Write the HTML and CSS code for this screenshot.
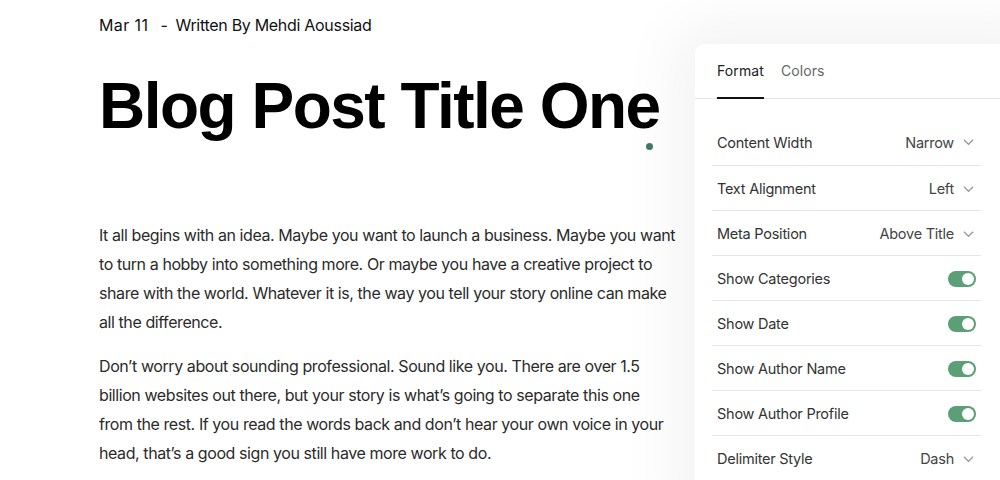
FILE: index.html
```html
<!DOCTYPE html>
<html lang="en">
  <head>
    <meta charset="UTF-8" />
    <meta name="viewport" content="width=device-width, initial-scale=1.0" />
    <title>Blog Post Title One</title>
    <link rel="stylesheet" href="styles.css">
  </head>
  <body>
    <article class="post">
      <div class="meta">
        <span class="date">Mar 11</span>
        <span class="dash">-</span>
        <span>Written By Mehdi Aoussiad</span>
      </div>
      <h1 class="title">Blog Post Title One<span class="cursor-dot"></span></h1>
      <div class="body">
        <p>It all begins with an idea. Maybe you want to launch a business. Maybe you want to turn a hobby into something more. Or maybe you have a creative project to share with the world. Whatever it is, the way you tell your story online can make all the difference.</p>
        <p>Don’t worry about sounding professional. Sound like you. There are over 1.5 billion websites out there, but your story is what’s going to separate this one from the rest. If you read the words back and don’t hear your own voice in your head, that’s a good sign you still have more work to do.</p>
      </div>
    </article>

    <aside class="panel">
      <div class="panel-tabs">
        <button class="panel-tab active">Format</button>
        <button class="panel-tab">Colors</button>
      </div>
      <ul class="options">
        <li class="option">
          <span>Content Width</span>
          <span class="select">Narrow <svg class="chev" viewBox="0 0 12 8"><path d="M1 1.5l5 5 5-5" /></svg></span>
        </li>
        <li class="option">
          <span>Text Alignment</span>
          <span class="select">Left <svg class="chev" viewBox="0 0 12 8"><path d="M1 1.5l5 5 5-5" /></svg></span>
        </li>
        <li class="option">
          <span>Meta Position</span>
          <span class="select">Above Title <svg class="chev" viewBox="0 0 12 8"><path d="M1 1.5l5 5 5-5" /></svg></span>
        </li>
        <li class="option">
          <span>Show Categories</span>
          <span class="toggle on"></span>
        </li>
        <li class="option">
          <span>Show Date</span>
          <span class="toggle on"></span>
        </li>
        <li class="option">
          <span>Show Author Name</span>
          <span class="toggle on"></span>
        </li>
        <li class="option">
          <span>Show Author Profile</span>
          <span class="toggle on"></span>
        </li>
        <li class="option">
          <span>Delimiter Style</span>
          <span class="select">Dash <svg class="chev" viewBox="0 0 12 8"><path d="M1 1.5l5 5 5-5" /></svg></span>
        </li>
      </ul>
    </aside>
  </body>
</html>
```

FILE: styles.css
```css
* {
  margin: 0;
  padding: 0;
  box-sizing: border-box;
}

body {
  font-family: Inter, "Noto Sans", sans-serif;
  background-color: #fff;
  color: #222;
  height: 480px;
  overflow: hidden;
}

.post {
  padding: 14px 0 0 99px;
  width: 690px;
}

.meta {
  display: flex;
  font-size: 16px;
  line-height: 22px;
  color: #111;
  letter-spacing: -0.3px;
}

.meta .date {
  letter-spacing: 0.4px;
}

.meta .dash {
  margin: 0 8px 0 12px;
}

.title {
  position: relative;
  margin-top: 34px;
  font-family: "Liberation Sans", Arial, sans-serif;
  font-weight: 700;
  font-size: 64px;
  line-height: 72px;
  color: #000;
  letter-spacing: -1.5px;
}

.cursor-dot {
  position: absolute;
  left: 547px;
  top: 73px;
  width: 7px;
  height: 7px;
  border-radius: 50%;
  background-color: #3f7d63;
}

.body {
  margin-top: 79px;
  width: 578px;
  font-size: 16px;
  line-height: 29px;
  color: #2b2b2b;
  letter-spacing: -0.42px;
}

.body p + p {
  margin-top: 15px;
}

/* floating settings panel */
.panel {
  position: absolute;
  top: 44px;
  left: 695px;
  width: 330px;
  height: 480px;
  background-color: #fff;
  border-radius: 10px;
  box-shadow: 0 0 60px 20px rgba(0, 0, 0, 0.05);
}

.panel-tabs {
  display: flex;
  gap: 17px;
  padding: 0 22px;
  height: 55px;
  border-bottom: 1px solid #e3e3e3;
}

.panel-tab {
  border: none;
  background: none;
  font-family: inherit;
  font-size: 14px;
  letter-spacing: 0.1px;
  color: #666;
  padding-top: 18px;
  height: 55px;
  display: flex;
  align-items: flex-start;
  cursor: pointer;
}

.panel-tab.active {
  color: #222;
  box-shadow: inset 0 -2px 0 #111;
}

.options {
  list-style: none;
  padding: 0 19px 0 17px;
  width: 305px;
}

.option {
  display: flex;
  align-items: center;
  justify-content: space-between;
  height: 45px;
  padding: 1px 5px 0;
  border-bottom: 1px solid #e6e6e6;
  font-size: 14.5px;
  letter-spacing: -0.25px;
  color: #333;
}

.option:first-child {
  height: 67px;
  padding-top: 20px;
}

.select {
  display: flex;
  align-items: center;
  gap: 9px;
  margin-right: 2px;
  color: #444;
}

.chev {
  width: 11px;
  height: 8px;
  fill: none;
  stroke: #999;
  stroke-width: 1.3;
}

.toggle {
  position: relative;
  width: 28px;
  height: 16px;
  border-radius: 8px;
  background-color: #5a9f76;
}

.toggle::after {
  content: "";
  position: absolute;
  top: 2px;
  right: 2px;
  width: 12px;
  height: 12px;
  border-radius: 50%;
  background-color: #fff;
}
```
